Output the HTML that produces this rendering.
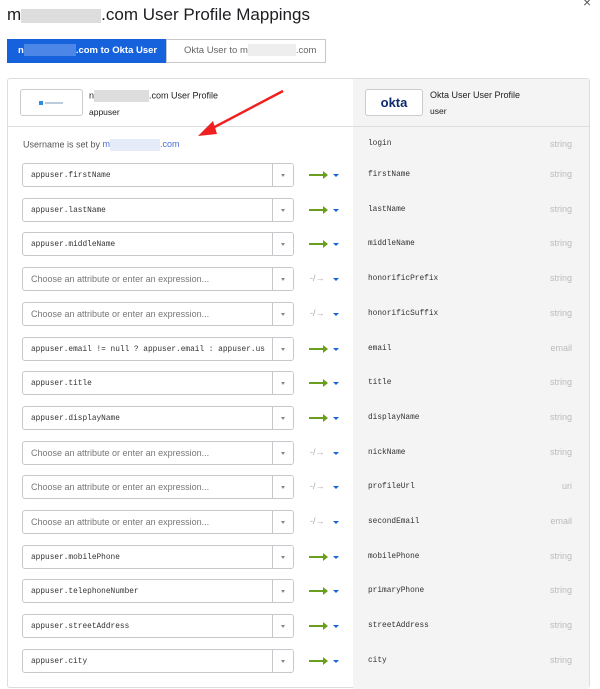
<!DOCTYPE html>
<html><head><style>
*{box-sizing:border-box;margin:0;padding:0}
body{width:600px;height:681px;overflow:hidden;background:#fff;font-family:"Liberation Sans",sans-serif;color:#1d1d21;position:relative}
.abs{position:absolute}
.mono{font-family:"Liberation Mono",monospace}
.blur{display:inline-block;background:#ddd;height:12px;vertical-align:middle}
.inp{position:absolute;left:22px;width:272px;height:24px;border:1px solid #c8c8cc;border-radius:3px;background:#fff;font-size:7.8px;line-height:22px;padding-left:8px;padding-right:24px;color:#333;overflow:hidden;white-space:nowrap}
.inp.mono{line-height:24px}
.inp.ph{font-family:"Liberation Sans",sans-serif;font-size:9px;color:#777}
.inp .dd{position:absolute;right:0;top:0;width:21px;height:22px;border-left:1px solid #c8c8cc;background:#fff}
.inp .dd:after{content:"";position:absolute;left:8px;top:10px;border-left:2.5px solid transparent;border-right:2.5px solid transparent;border-top:3px solid #888}
.arr{position:absolute;left:309px;width:16px;height:2px;background:#6a9e1f}
.arr:after{content:"";position:absolute;right:-3px;top:-3px;border-left:5px solid #6a9e1f;border-top:4px solid transparent;border-bottom:4px solid transparent}
.na{position:absolute;left:310px;font-size:9px;color:#aaa}
.tri{position:absolute;left:333px;border-left:3px solid transparent;border-right:3px solid transparent;border-top:3px solid #1662dd}
.rl{position:absolute;left:368px;font-size:7.8px;color:#333}
.rt{position:absolute;right:28px;font-size:9px;color:#bbb}
</style></head><body>
<div class="abs" style="left:7px;top:5px;font-size:17px;">m<span class="blur" style="width:80px;height:14px;background:#ddd"></span>.com User Profile Mappings</div>
<div class="abs" style="left:583px;top:-6px;font-size:14px;color:#555">×</div>
<div class="abs" style="left:7px;top:39px;width:159px;height:24px;background:#1662dd;color:#fff;font-size:9.5px;font-weight:bold;line-height:24px;padding-left:11px">n<span class="blur" style="width:52px;background:#4c86e6"></span>.com to Okta User</div>
<div class="abs" style="left:166px;top:39px;width:160px;height:24px;border:1px solid #c8c8cc;color:#666;font-size:9.5px;line-height:22px;padding-left:17px">Okta User to m<span class="blur" style="width:48px;background:#eee"></span>.com</div>
<div class="abs" style="left:7px;top:78px;width:583px;height:610px;border:1px solid #ddd;border-radius:3px"></div>
<div class="abs" style="left:353px;top:79px;width:236px;height:610px;background:#f4f4f4"></div>
<div class="abs" style="left:8px;top:126px;width:581px;height:1px;background:#ddd"></div>
<div class="abs" style="left:20px;top:89px;width:63px;height:27px;border:1px solid #ccc;border-radius:3px;background:#fff"><div style="position:absolute;left:18px;top:11px;width:4px;height:4px;background:#2a8ee0"></div><div style="position:absolute;left:24px;top:12px;width:18px;height:2px;background:#bcd"></div></div>
<div class="abs" style="left:89px;top:90px;font-size:9px">n<span class="blur" style="width:55px"></span>.com User Profile</div>
<div class="abs" style="left:89px;top:107px;font-size:8.5px">appuser</div>
<div class="abs" style="left:365px;top:89px;width:58px;height:27px;border:1px solid #ccc;border-radius:3px;background:#fff;text-align:center;color:#0d2a6b;font-size:13px;line-height:25px;font-weight:bold">okta</div>
<div class="abs" style="left:430px;top:90px;font-size:9px">Okta User User Profile</div>
<div class="abs" style="left:430px;top:106px;font-size:8.5px">user</div>
<div class="abs" style="left:23px;top:139px;font-size:9px;color:#555">Username is set by <span style="color:#4a6fd8">m<span class="blur" style="width:50px;background:#e6ebfa"></span>.com</span></div>
<svg class="abs" style="left:195px;top:88px" width="92" height="52"><line x1="88" y1="3" x2="12" y2="43" stroke="#f02020" stroke-width="2.5"/><polygon points="3,48 18,33 22,46" fill="#f02020"/></svg>
<div class="rl mono" style="top:140px">login</div><div class="rt" style="top:139px">string</div>
<div id="rows"></div>
<script>
var rows=[["appuser.firstName","firstName","string"],["appuser.lastName","lastName","string"],["appuser.middleName","middleName","string"],["","honorificPrefix","string"],["","honorificSuffix","string"],["appuser.email != null ? appuser.email : appuser.us","email","email"],["appuser.title","title","string"],["appuser.displayName","displayName","string"],["","nickName","string"],["","profileUrl","uri"],["","secondEmail","email"],["appuser.mobilePhone","mobilePhone","string"],["appuser.telephoneNumber","primaryPhone","string"],["appuser.streetAddress","streetAddress","string"],["appuser.city","city","string"]];
var h="";rows.forEach(function(r,i){var c=175+i*34.7;var t=c-12;
h+='<div class="inp '+(r[0]?'mono':'ph')+'" style="top:'+t+'px">'+(r[0]||'Choose an attribute or enter an expression...')+'<div class="dd"></div></div>';
h+=r[0]?'<div class="arr" style="top:'+(c-1)+'px"></div>':'<div class="na" style="top:'+(c-6)+'px">-/→</div>';
h+='<div class="tri" style="top:'+(c-1)+'px"></div>';
h+='<div class="rl mono" style="top:'+(c-4)+'px">'+r[1]+'</div><div class="rt" style="top:'+(c-6)+'px">'+r[2]+'</div>';});
document.getElementById("rows").innerHTML=h;
</script>
</body></html>
